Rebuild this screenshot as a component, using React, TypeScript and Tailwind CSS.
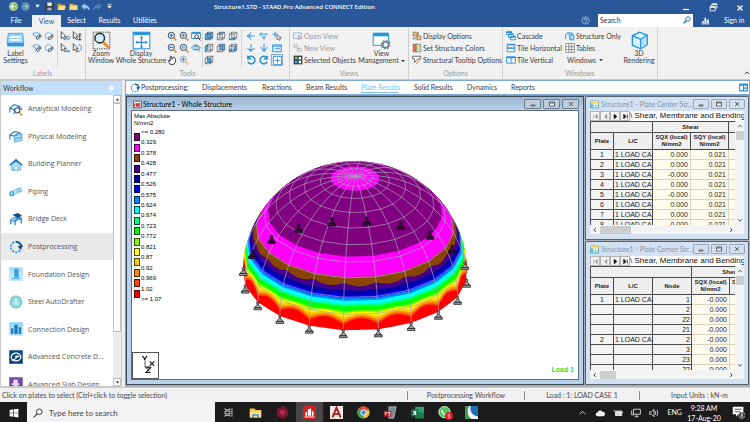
import React from "react";

/* ---------- shared icon helpers ---------- */

type P = { className?: string; children?: React.ReactNode };

const Ic = ({ className = "size-[10px]", children }: P) => (
  <svg viewBox="0 0 16 16" className={`${className} shrink-0`} fill="none" stroke="#2b8fd6" strokeWidth="1.5" aria-hidden="true">
    {children}
  </svg>
);

const Magnifier = ({ mark, muted = false }: { mark: React.ReactNode; muted?: boolean }) => (
  <Ic>
    <circle cx="7" cy="7" r="5" fill="#e4f3ff" stroke={muted ? "#9ba8b3" : "#2c3c4c"} />
    <path d="M11 11l4 4" stroke={muted ? "#eab98a" : "#e58a2b"} strokeWidth="2.5" />
    <g stroke="#1e80cf">{mark}</g>
  </Ic>
);

const Cube = ({ face }: { face: React.ReactNode }) => (
  <Ic>
    <g fill="#55b4f0" stroke="none">{face}</g>
    <path d="M2 5h8v9H2zM2 5l4-3h8v9l-4 3M10 5l4-3M6 2v9h8M6 11l-4 3" stroke="#444f5a" strokeWidth="1" />
  </Ic>
);

const Beads = ({ flip = false }: { flip?: boolean }) => (
  <Ic>
    <path d={flip ? "M2 5l5-3 6 3v6l-5 3-6-3z" : "M1 5l6-3 6 3-6 4z"} stroke="#37a0e4" strokeDasharray={flip ? "2 1" : undefined} />
    <path d="M6 11l3-2 3 2-3 3z" fill="#fff" stroke="#33475a" />
    <circle cx="13" cy="8" r="1.6" fill="#fff" stroke="#33475a" />
  </Ic>
);

const Cursor = ({ extra }: { extra: React.ReactNode }) => (
  <Ic>
    <path d="M2 1v11l3-2 2 4 2-1-2-4h3z" fill="#fff" stroke="#30363c" strokeWidth="1.3" />
    {extra}
  </Ic>
);

/* ---------- title bar ---------- */

const quick: [string, React.ReactNode][] = [
  ["Back", <><circle cx="8" cy="8" r="7" fill="#74bf43" stroke="#e5f3d9" /><path d="M12 8H5M8 4L4 8l4 4" stroke="#fff" strokeWidth="2" /></>],
  ["Forward", <><circle cx="8" cy="8" r="7" fill="#4d87a3" stroke="#6f9bbd" /><path d="M4 8h7M8 4l4 4-4 4" stroke="#a6c8d8" strokeWidth="2" /></>],
  ["History", <path d="M3 4h10l-5 7z" fill="#fff" stroke="none" />],
  ["Save", <><path d="M1 1h14v14H1z" fill="#34393f" stroke="none" /><path d="M4 1h8v6H4z" fill="#e8eef4" stroke="none" /><path d="M4 10h8v5H4z" fill="#9fb2c2" stroke="none" /></>],
  ["Open", <><path d="M1 3h5l2 2h6v9H1z" fill="#d9a632" stroke="none" /><path d="M4 7h12l-3 7H1z" fill="#ffe07a" stroke="none" /></>],
  ["Close model", <><path d="M1 3h5l2 2h7v9H1z" fill="#e8b548" stroke="none" /><path d="M1 7h14v7H1z" fill="#fbd97d" stroke="none" /></>],
  ["Undo", <path d="M1 8l6-5v3c5 0 8 3 8 8-2-3-4-4-8-4v3z" fill="#8fd0fa" stroke="#c9e9ff" strokeWidth=".8" />],
  ["Redo", <path d="M15 8L9 3v3c-5 0-8 3-8 8 2-3 4-4 8-4v3z" fill="#3f83b9" stroke="#5fa4d4" strokeWidth=".8" />],
  ["Customize", <path d="M3 3h10M4 7h8l-4 5z" fill="#fff" stroke="#fff" />],
];

const Header = () => (
  <header className="h-[27px] shrink-0 bg-[#2a579a] text-white">
    <div className="flex h-[13px] items-center pl-2">
      <div className="flex w-[206px] shrink-0 gap-[2px]">
        {quick.map(([label, art]) => (
          <button key={label} aria-label={label} className="flex w-[10px] items-center justify-center">
            <Ic className={label === "History" || label === "Customize" ? "size-[7px]" : "size-[9px]"}>{art}</Ic>
          </button>
        ))}
      </div>
      <h1 className="flex-1 font-['Open_Sans',sans-serif] text-[6px] leading-[12px] font-semibold whitespace-nowrap">Structure1.STD - STAAD.Pro Advanced CONNECT Edition</h1>
      <div className="flex w-[72px] items-center justify-between pt-[2px] pr-[6px] pl-1">
        <button aria-label="Minimize"><Ic className="size-[8px]"><path d="M2 11h12" stroke="#fff" strokeWidth="2.5" /></Ic></button>
        <button aria-label="Restore"><Ic className="size-[9px]"><path d="M5 5V2h9v7h-3M2 6h9v8H2z" stroke="#fff" /><path d="M2 7h9M5 2h9" stroke="#fff" strokeWidth="2.5" /></Ic></button>
        <button aria-label="Close"><Ic className="size-[8px]"><path d="M3 3l10 10M13 3L3 13" stroke="#fff" strokeWidth="2.6" /></Ic></button>
      </div>
    </div>
    <div className="flex h-[14px] items-center text-[7px] leading-[10px]">
      <nav className="flex h-full flex-1 items-center">
        <button className="w-[32px]">File</button>
        <button className="mt-[2px] h-[12px] w-[29px] bg-[#f1f1f1] text-[#2a579a]">View</button>
        <button className="w-[31px]">Select</button>
        <button className="w-[35px]">Results</button>
        <button className="w-[36px]">Utilities</button>
      </nav>
      <button aria-label="Help" className="mr-2">
        <Ic className="size-[9px]"><circle cx="8" cy="8" r="6.5" stroke="#8db9ee" /><path d="M5.5 6.5c0-3 5-3 5 0 0 1.500-2.500 1.500-2.500 3.500M8 11v2" stroke="#d7e7fb" /></Ic>
      </button>
      <label className="flex h-[13px] w-[95px] items-center bg-white pr-[2px] pl-[2px]">
        <input aria-label="Search" placeholder="Search" className="w-full min-w-0 flex-1 text-[7px] placeholder:text-[#333]" />
        <Ic className="size-[8px]"><circle cx="10" cy="6" r="4.500" stroke="#2a6fc0" strokeWidth="2" /><path d="M7 9l-6 6" stroke="#2a6fc0" strokeWidth="2.500" /></Ic>
      </label>
      <button aria-label="Account" className="ml-2 flex items-center">
        <Ic className="size-[9px]"><path d="M1 14h14" stroke="#fff" /><path d="M2 13V9h3v4M6 13V3h3v10M10 13V6h4v7" fill="#e5f1ff" stroke="none" /></Ic>
      </button>
      <button className="ml-[14px] w-[26px] text-left whitespace-nowrap">Sign in</button>
    </div>
  </header>
);

/* ---------- ribbon ---------- */

const Big = ({ art, lines, className, arrow }: { art: React.ReactNode; lines: string[]; className: string; arrow?: boolean }) => (
  <button className={`${className} flex h-[35px] shrink-0 flex-col items-center leading-[7px] whitespace-nowrap`}>
    <span className="flex h-[20px] items-center">{art}</span>
    <span>{lines[0]}</span>
    <span className="flex items-center">
      {lines[1]}
      {arrow && <Ic className="ml-[2px] size-[4px]"><path d="M1 4h14l-7 9z" fill="#333" stroke="none" /></Ic>}
    </span>
  </button>
);

const Grid = ({ items, cols, label }: { items: React.ReactNode[]; cols: string; label: string }) => (
  <div className={`grid ${cols} h-9 shrink-0 auto-rows-[12px] content-start`}>
    {items.map((it, i) => (
      <button key={i} aria-label={`${label} ${i + 1}`} className="flex items-center justify-center">
        {it}
      </button>
    ))}
  </div>
);

const Group = ({ title, className, children }: { title: string; className: string; children: React.ReactNode }) => (
  <section className={`${className} flex shrink-0 flex-col border-r border-[#cfcfcf] pt-[3px]`}>
    <div className="flex h-[38px]">{children}</div>
    <h2 className="text-center leading-[11px] text-[#9a9a9a]">{title}</h2>
  </section>
);

const Row = ({ art, text, muted }: { art?: React.ReactNode; text: React.ReactNode; muted?: boolean }) => (
  <button className={`flex h-3 items-center gap-px whitespace-nowrap ${muted ? "text-[#9c9c9c]" : ""}`}>
    {art}
    <span className="flex items-center">{text}</span>
  </button>
);

const Sep = () => <div className="h-[38px] w-px shrink-0 bg-[#d2d2d2]" />;

const rotations: React.ReactNode[] = [
  <Ic><path d="M2 8h12M8 2C5 5 5 11 8 14M5 5L2 8l3 3" /></Ic>,
  <Ic><path d="M2 5h12M11 8c-3 4-6 3-6 0M8 14V9M4 2L1 5l3 3" /></Ic>,
  <Ic><path d="M5 1v9M1 5h8" /><path d="M8 6v8l2-2 2 3 1-1-1-3h3z" fill="#fff" stroke="#333" strokeWidth="1" /></Ic>,
  <Ic><path d="M8 2v12M2 8c3 4 9 4 12 0M5 11l3 3" /></Ic>,
  <Ic><path d="M8 1v12M3 6c0 6 10 6 10 0M5 11l3 3 3-3" /></Ic>,
  <Ic><path d="M1 3h14v11H1z" fill="#dff1ff" /><path d="M1 5h14M4 10l2-2 2 2 3-2 2 2" /></Ic>,
  <Ic><path d="M4 4a6 6 0 1 1-1 7M3 1v5h5" strokeWidth="2.400" /></Ic>,
  <Ic><path d="M12 4a6 6 0 1 0 1 7M13 1v5H8" strokeWidth="2.400" /></Ic>,
  <span className="flex size-[12px] items-center justify-center border border-[#8da9c4] bg-[#cfe3f5]">
    <Ic className="size-[9px]"><path d="M1 1h14v14H1z" fill="#fff" /><path d="M8 3v10M3 8h10" /></Ic>
  </span>,
];

const Ribbon = () => (
  <div className="flex h-[53px] shrink-0 overflow-hidden border-b border-[#c8c8c8] bg-[#f1f1f1] text-[7px] text-[#3c3c3c]">
    <Group title="Labels" className="w-[86px]">
      <Big
        className="w-[31px]"
        lines={["Label", "Settings"]}
        art={<Ic className="size-[19px]"><path d="M2 2h12l1 8-1 2H2l-1-2z" fill="#8fd2fb" stroke="#4ba8e3" strokeWidth=".8" /><path d="M3 5h10M3 7.500h10" stroke="#fff" /><path d="M1 10h14v3H1z" fill="#2e95dc" stroke="none" /></Ic>}
      />
      <Grid label="Labels" cols="grid-cols-[12px_12px]" items={[<Beads />, <Beads flip />, <Beads />, <Beads flip />]} />
      <div className="w-[2px]" />
      <Sep />
      <Grid
        label="Pointer"
        cols="grid-cols-[13px_12px]"
        items={[
          <Cursor extra={<circle cx="13" cy="11" r="2.500" />} />,
          <Cursor extra={<path d="M10 5h5M12.500 5v9M10 14h5" stroke="#333" />} />,
          <Cursor extra={<path d="M10 14l3-3 3 3z" />} />,
          <Cursor extra={<path d="M10 3c6 0 6 4 4 8l-5 4" />} />,
        ]}
      />
    </Group>
    <Group title="Tools" className="w-[204px]">
      <Big
        className="w-[30px]"
        lines={["Zoom", "Window"]}
        art={<Ic className="size-[19px]"><path d="M1 1h14v14H1z" stroke="#222" strokeWidth=".8" strokeDasharray="1 1" /><circle cx="6.500" cy="6" r="4" fill="#d4ecff" stroke="#30353a" strokeWidth="1.300" /><path d="M9.500 9.500l4.500 4.500" stroke="#ee8a22" strokeWidth="2.200" /></Ic>}
      />
      <Big
        className="w-[50px]"
        lines={["Display", "Whole Structure"]}
        art={<Ic className="size-[19px]"><path d="M1 1h14v14H1z" fill="#fff" strokeWidth=".9" /><path d="M1 1h14v2.500H1z" fill="#2b95dc" stroke="none" /><path d="M8 5v9M3.500 9.500h9M7 6l1-1 1 1M7 13l1 1 1-1M4.500 8.500l-1 1 1 1M11.500 8.500l1 1-1 1" strokeWidth="1" /></Ic>}
      />
      <Grid
        label="Zoom"
        cols="grid-cols-[12px_12px_12px]"
        items={[
          <Magnifier mark={<path d="M4.500 7h5M7 4.500v5" strokeWidth="2" />} />,
          <Magnifier mark={<path d="M4 7h6M7 4v6" />} />,
          <Ic><path d="M1 3h14v9H1z" fill="#fff" /><path d="M1 3h14" strokeWidth="3" /><circle cx="9" cy="9" r="3" fill="#fff" stroke="#333" /><path d="M11 11l4 4" stroke="#333" /></Ic>,
          <Magnifier mark={<path d="M4 7h6" strokeWidth="2" />} />,
          <Magnifier mark={<circle cx="7" cy="7" r="1.500" />} />,
          <Ic><path d="M1 8c3-6 11-6 14 0-3 4-11 4-14 0z" /><circle cx="9" cy="8" r="3" /><path d="M11 10l3 4M3 6l5-4" stroke="#7089a0" /></Ic>,
          <Ic><path d="M5 15L2 9l2-1 1 2V3l2-1 1 5 2-4 2 1 2 4-1 4-2 3z" fill="#fff" stroke="#3c3c3c" /></Ic>,
          <Magnifier muted mark={<path d="M4 7h6M7 4v6" />} />,
        ]}
      />
      <Sep />
      <Grid
        label="View from"
        cols="grid-cols-[12px_12px_12px]"
        items={[
          <Cube face={<path d="M2 5l4-3h8v9l-4 3H2z" />} />,
          <Cube face={<path d="M2 5l4-3h8l-4 3z" />} />,
          <Cube face={<path d="M2 14l4-3h8l-4 3z" />} />,
          <Cube face={<path d="M2 5l4-3v9l-4 3z" />} />,
          <Cube face={<path d="M6 2h8v9H6z" />} />,
          <Cube face={<path d="M10 5l4-3v9l-4 3zM2 9h5v5H2z" />} />,
          <Cube face={<path d="M5 5h7v8H5z" />} />,
        ]}
      />
      <div className="w-[2px]" />
      <Sep />
      <div className="w-[2px]" />
      <Grid label="Rotate" cols="grid-cols-[13px_13px_14px]" items={rotations} />
    </Group>
    <Group title="Views" className="w-[119px]">
      <div className="w-[65px] shrink-0 pl-[3px]">
        <Row muted text="Open View" art={<Ic><path d="M1 3h12v9H1z" stroke="#8cb9d8" /><path d="M9 7l5 5h-3l-2 2z" fill="#fff" stroke="#999" /></Ic>} />
        <Row muted text="New View" art={<Ic><path d="M2 3l4-1 2 3-3 3-4-2zM8 9l4-1 2 3-3 3-4-2zM5 7l4 3" stroke="#a5a5a5" /></Ic>} />
        <Row text="Selected Objects" art={<Ic><path d="M1 1h14v14H1z" fill="#2f3b45" stroke="none" /><path d="M3 3h4v4H3z" fill="#7ccc4a" stroke="none" /><path d="M9 9h4v4H9zM9 3h4v4H9z" fill="#fff" stroke="none" /><path d="M3 9h4v4H3z" fill="#4ea7e8" stroke="none" /></Ic>} />
      </div>
      <Big
        arrow
        className="w-[53px]"
        lines={["View", "Management"]}
        art={<Ic className="size-[19px]"><path d="M1 2h13v10H1z" fill="#fff" strokeWidth=".8" /><path d="M1 1.500h13v3H1z" fill="#2b95dc" stroke="none" /><circle cx="11.500" cy="11.500" r="2.500" fill="#f1f1f1" stroke="#6b7a88" strokeWidth="1.300" /><circle cx="11.500" cy="11.500" r="3.600" stroke="#6b7a88" strokeWidth="1" strokeDasharray="1.400 1.400" /></Ic>}
      />
    </Group>
    <Group title="Options" className="w-[94px]">
      <div className="pl-[3px]">
        <Row text="Display Options" art={<Ic><path d="M2 2h6v6H2zM8 8h6v6H8z" fill="#f3c890" stroke="#9a7548" /><path d="M10 2v4M3 10v4M5 12h2" stroke="#555" /></Ic>} />
        <Row text="Set Structure Colors" art={<Ic><path d="M2 2h5v12H2z" fill="#e7664a" stroke="#777" /><path d="M7 2h7v12H7z" fill="#cdebc4" stroke="#888" /><path d="M7 6h6M7 10h6" stroke="#e4b84c" /></Ic>} />
        <Row text="Structural Tooltip Options" art={<Ic><path d="M1 2h13v4H9L4 12V6H1z" fill="#fff" stroke="#666" /><path d="M7 14l6-8" stroke="#e0a04a" strokeWidth="2" /></Ic>} />
      </div>
    </Group>
    <Group title="Windows" className="w-[155px]">
      <div className="w-[62px] pl-[3px]">
        <Row text="Cascade" art={<Ic><path d="M1 1h8v5H1zM4 5h8v5H4zM7 9h8v5H7z" fill="#fff" /><path d="M1 2h8M4 5h8M7 9h8" strokeWidth="2" /></Ic>} />
        <Row text="Tile Horizontal" art={<Ic><path d="M2 2h12v12H2zM2 8h12" fill="#fff" /><path d="M2 3h12M2 8h12" strokeWidth="2" /></Ic>} />
        <Row text="Tile Vertical" art={<Ic><path d="M1 3h14v10H1zM8 3v10" fill="#fff" /><path d="M1 4h14" strokeWidth="2.500" /></Ic>} />
      </div>
      <div className="w-[56px]">
        <Row text="Structure Only" art={<Ic><path d="M1 13V7l3-4 4 4v6M4 3h7v5" /><path d="M8 6h6v8H8z" fill="#b9e1fb" /></Ic>} />
        <Row text="Tables" art={<Ic><path d="M1 1h14v14H1zM6 1v14M10.500 1v14M1 6h14M1 10.500h14" fill="#fff" stroke="#777" strokeWidth="1.200" /></Ic>} />
        <Row text={<span className="flex items-center gap-[3px] pl-[2px]">Windows<Ic className="size-[4px]"><path d="M1 4h14l-7 9z" fill="#333" stroke="none" /></Ic></span>} />
      </div>
      <Big
        className="w-[36px]"
        lines={["3D", "Rendering"]}
        art={<Ic className="size-[19px]"><path d="M2 4l6-3 6.500 2.500v8L9 15 2 12z" fill="#d9f0ff" stroke="#2195dc" strokeWidth="1.200" /><path d="M2 4l7 3 5.500-3.500M9 7v8" stroke="#2195dc" strokeWidth="1.200" /><path d="M9 7l5.500-3.500v8L9 15z" fill="#b5e0fa" stroke="#2195dc" strokeWidth=".8" /></Ic>}
      />
    </Group>
    <div className="flex flex-1 items-end justify-end pb-[3px]">
      <button aria-label="Collapse ribbon"><Ic className="size-[6px]"><path d="M2 11l6-6 6 6" stroke="#333" strokeWidth="2.500" /></Ic></button>
    </div>
  </div>
);

/* ---------- workflow panel ---------- */

const Tile = ({ id, from, to, children }: { id: string; from: string; to: string; children: React.ReactNode }) => (
  <>
    <defs>
      <linearGradient id={id} x1="0" y1="0" x2="0" y2="1"><stop offset="0" stopColor={from} /><stop offset="1" stopColor={to} /></linearGradient>
    </defs>
    <path d="M.5.5h15v15H.5z" fill={`url(#${id})`} stroke={from} strokeWidth=".6" />
    {children}
  </>
);

const SwirlArt = (
  <>
    <circle cx="8" cy="8" r="6" stroke="#2f9ae0" strokeWidth="2" strokeDasharray="2.500 1.300" />
    <path d="M8 2a6 6 0 0 1 6 6" stroke="#1b5f9e" strokeWidth="2.400" />
    <path d="M10 7l6-1-3 5z" fill="#12497c" stroke="none" />
  </>
);

const workflows: [string, React.ReactNode][] = [
  ["Analytical Modeling", <><path d="M1 12V7l5-4 6 2 3 4M1 7l5 2 6-4M6 9v5" stroke="#2d78ad" strokeWidth="1.300" /><circle cx="9.500" cy="9.500" r="3" fill="#e6f4fd" stroke="#334d66" strokeWidth="1.200" /><path d="M12 12l3 3.500" stroke="#ee8a22" strokeWidth="1.800" /></>],
  ["Physical Modeling", <><path d="M1 12V7l5-4 6 1 3 3M1 7l5 1 6-4" stroke="#3183bb" strokeWidth="1.400" /><path d="M6 8l9-2v3l-9 2zM6 12l9-2v3l-9 2z" fill="#a9dbf7" stroke="#3e9fd9" strokeWidth=".8" /></>],
  ["Building Planner", <><path d="M3 8v7h10V8L8 4z" fill="#aadcf9" stroke="#46a3dd" strokeWidth=".8" /><path d="M6.500 15v-5h3v5z" fill="#fff" stroke="#46a3dd" strokeWidth=".6" /><path d="M0 9l8-7 8 7-1 1-7-5-7 5z" fill="#2173b3" stroke="none" /></>],
  ["Piping", <><path d="M2 9l11-5 2 4-11 5z" fill="#b5e0fa" stroke="#59afe2" strokeWidth=".8" /><ellipse cx="3" cy="11" rx="1.800" ry="2.300" fill="#e8f6ff" stroke="#3c98d4" /><path d="M9 5.500l2 4M11 5l2 4" stroke="#59afe2" strokeWidth=".8" /></>],
  ["Bridge Deck", <><path d="M1 9l10-5 4 3-9 4z" fill="#7fc5ef" stroke="#2e86c4" strokeWidth=".8" /><path d="M2 10v4M7 11v4M14 8v5M7 11c1-3 3-4 7-3" stroke="#2e86c4" strokeWidth="1.500" /><path d="M4 3l6-2 5 3-5 3z" fill="#104f86" stroke="none" /></>],
  ["Postprocessing", SwirlArt],
  ["Foundation Design", <Tile id="fd" from="#9adaf7" to="#d8f2ff"><path d="M6 2h5v10H6z" fill="#3f9fd8" stroke="none" /><path d="M3 12h10v2H3z" fill="#5ab6e8" stroke="none" /></Tile>],
  ["Steel AutoDrafter", <><circle cx="8" cy="8" r="7" fill="#5dc0cf" stroke="#9adbe4" /><circle cx="8" cy="8" r="4.500" fill="#8ed6de" stroke="#e0f7f9" strokeWidth=".8" /><path d="M6 11l2-6 2 6M7 9h2" stroke="#fff" strokeWidth="1" /></>],
  ["Connection Design", <Tile id="cd" from="#8ad4f7" to="#e6f7ff"><path d="M2 7h3v7H2zM6 3h4v11H6zM11 6h3v8h-3z" fill="#1c7ec4" stroke="none" /></Tile>],
  ["Advanced Concrete D...", <Tile id="ac" from="#0f4c8c" to="#0a3c74"><ellipse cx="8" cy="8" rx="5.500" ry="4.500" stroke="#fff" strokeWidth="1.500" /><path d="M3 12c4 0 5-5 9-5-2 0-4-1-5 1" stroke="#fff" strokeWidth="1.300" /></Tile>],
  ["Advanced Slab Design", <Tile id="as" from="#7b4fa8" to="#5e3690"><path d="M5 3h5v9H5zM3 7h9v2H3z" fill="#e6d9f5" stroke="none" /></Tile>],
];

const Workflow = () => (
  <aside className="flex w-[122px] shrink-0 flex-col border border-[#c9c9c9] bg-white">
    <div className="flex h-[14px] shrink-0 items-center justify-between bg-[#c3dffc] px-[2px] text-[7px] text-[#333]">
      <h2>Workflow</h2>
      <button aria-label="Pin panel" className="mr-1"><Ic className="size-[7px]"><path d="M5 2h6v7H5zM3 9h10M8 9v6" fill="#fff" stroke="#fff" strokeWidth="2" /></Ic></button>
    </div>
    <div className="flex h-[291px] overflow-hidden">
      <ul className="flex h-[303px] flex-1 flex-col">
        {workflows.map(([name, art]) => (
          <li key={name} className="flex min-h-0 flex-1">
            <button className={`flex flex-1 items-center gap-[5px] pl-2 font-['Open_Sans',sans-serif] text-[7px] whitespace-nowrap text-[#555] ${name === "Postprocessing" ? "bg-[#e9e9e9]" : ""}`}>
              <Ic className="size-[14px]">{art}</Ic>
              {name}
            </button>
          </li>
        ))}
      </ul>
      <div className="flex w-2 shrink-0 flex-col bg-[#ececec]">
        <button aria-label="Scroll up" className="flex h-2 items-center justify-center border border-[#c0c0c0] bg-white"><Ic className="size-[5px]"><path d="M3 11l5-6 5 6z" fill="#111" stroke="none" /></Ic></button>
        <div className="h-[229px] border border-[#c0c0c0] bg-white" />
        <div className="flex-1" />
        <button aria-label="Scroll down" className="flex h-2 items-center justify-center border border-[#c0c0c0] bg-white"><Ic className="size-[5px]"><path d="M3 5l5 6 5-6z" fill="#111" stroke="none" /></Ic></button>
      </div>
    </div>
  </aside>
);

/* ---------- dome model ---------- */

const CX = 223;
const CY = 163.5;
const R = 112.7;
const rad = (d: number) => (d * Math.PI) / 180;

const raw = (phi: number, th: number): [number, number] => [
  CX + R * Math.cos(rad(phi)) * Math.cos(rad(th)),
  CY + R * 0.505 * Math.cos(rad(phi)) * Math.sin(rad(th)) - R * 0.87 * Math.sin(rad(phi)),
];

/* Plates are flat between meridians, which stand every 18 degrees from 6. */
const at = (phi: number, th: number): [number, number] => {
  const k = Math.floor((th - 6) / 18);
  const a = 6 + k * 18;
  const t = (th - a) / 18;
  const p = raw(phi, a);
  const q = raw(phi, a + 18);
  return [p[0] + (q[0] - p[0]) * t, p[1] + (q[1] - p[1]) * t];
};

const plateT = (th: number) => (((th - 6) / 18) % 1 + 1) % 1;
const toPath = (pts: [number, number][]) => "M" + pts.map((p) => p[0].toFixed(1) + " " + p[1].toFixed(1)).join("L");
const visible = (phi: number) => {
  const s = 0.577 * Math.tan(rad(phi));
  return s >= 1 ? 90 : (Math.asin(s) * 180) / Math.PI;
};

const region = (phi: number, bump: number) => {
  const pts: [number, number][] = [];
  if (phi >= 60) {
    for (let th = 0; th <= 360; th += 3) pts.push(at(phi, th));
    return toPath(pts) + "Z";
  }
  const s = -visible(phi);
  for (let th = s; th <= 180 - s; th += 1.5) {
    pts.push(at(phi + bump * Math.sin(Math.PI * plateT(th)), th));
  }
  const last = raw(phi, 180 - s);
  const first = raw(phi, s);
  return `${toPath(pts)}L${last[0].toFixed(1)} ${last[1].toFixed(1)}A${R} ${R} 0 0 1 ${first[0].toFixed(1)} ${first[1].toFixed(1)}Z`;
};

const bands: [number, number, string][] = [
  [0, 0, "#ff0000"],
  [3.4, 3.2, "#ff4400"],
  [4.6, 2.8, "#ff8800"],
  [6, 2.4, "#ffcc00"],
  [7.6, 1.6, "#ffff00"],
  [9.4, 0.8, "#88ff00"],
  [10.6, 0.4, "#00ff00"],
  [13.2, 0, "#00ff88"],
  [14.3, 0, "#00ffff"],
  [16.2, 0, "#0088ff"],
  [17.6, 0, "#0000ff"],
  [19, 0.2, "#0000aa"],
  [22, -0.8, "#440088"],
  [25.4, -2, "#884400"],
  [28.4, 0, "#ff00ff"],
  [38.8, 0, "#800080"],
  [77.5, 0, "#ff00ff"],
];

const meridians = Array.from({ length: 20 }, (_, k) => {
  const th = 6 + 18 * k;
  const pts: [number, number][] = [];
  for (let phi = 0; phi <= 90; phi += 3) {
    if (0.866 * Math.cos(rad(phi)) * Math.sin(rad(th)) + 0.5 * Math.sin(rad(phi)) > -0.02) pts.push(raw(phi, th));
  }
  return toPath(pts);
});

const rings = [9, 18, 28, 36, 45, 54, 63, 72, 81].map((phi) => {
  const full = phi >= 60;
  const from = full ? 0 : -visible(phi);
  const to = full ? 360 : 180 - from;
  const pts: [number, number][] = [];
  for (let th = from; th <= to; th += 3) pts.push(at(phi, th));
  return toPath(pts);
});

const supports = Array.from({ length: 20 }, (_, k) => raw(0, 6 + 18 * k));

const Dome = () => (
  <svg viewBox="0 0 446 269" className="absolute inset-0 size-full" role="img" aria-label="Dome plate stress contour">
    {bands.map(([phi, bump, color], i) => (
      <path key={i} d={region(phi, bump)} fill={color} />
    ))}
    <g fill="none" stroke="#aaa2b6" strokeWidth=".8" opacity=".9">
      {[...meridians, ...rings].map((d, i) => (
        <path key={i} d={d} />
      ))}
    </g>
    {supports.map(([x, y], i) => {
      const back = Math.sin(rad(6 + 18 * i)) < -0.35;
      return (
        <g key={i} transform={`translate(${x.toFixed(1)} ${y.toFixed(1)})`} stroke={back ? "#140014" : "#222"} strokeWidth=".8" fill={back ? "#3a1a3a" : "#a5a5a5"}>
          <path d="M0 1.500L-3.200 5.500H3.200Z" />
          <path d="M-3.800 5.500h7.600v2h-7.600z" />
          <circle cx="0" cy=".6" r="1.200" />
        </g>
      );
    })}
  </svg>
);

/* ---------- MDI windows ---------- */

const swatches = [
  "bg-[#800080]", "bg-[#ff00ff]", "bg-[#884400]", "bg-[#440088]", "bg-[#0000aa]", "bg-[#0000ff]", "bg-[#0088ff]", "bg-[#00ffff]",
  "bg-[#00ff88]", "bg-[#00ff00]", "bg-[#88ff00]", "bg-[#ffff00]", "bg-[#ffcc00]", "bg-[#ff8800]", "bg-[#ff4400]", "bg-[#ff0000]",
];
const levels = ["<= 0.280", "0.329", "0.378", "0.428", "0.477", "0.526", "0.575", "0.624", "0.674", "0.723", "0.772", "0.821", "0.87", "0.92", "0.969", "1.02", ">= 1.07"];

const Buttons = ({ active }: { active?: boolean }) => (
  <div className="flex gap-[2px]">
    {["M4 10h8v2H4z", "M3 4h10v8H3zM3 6h10", "M4 4l8 8M12 4l-8 8"].map((d, i) => (
      <button
        key={d}
        aria-label={["Minimize", "Maximize", "Close"][i]}
        className={`flex items-center justify-center rounded-[1px] border ${active ? "h-[10px] w-[17px] border-[#6f7f92] bg-[#bdcbda]" : "h-[10px] w-[16px] border-[#9aa9b9] bg-[#d3dfec]"}`}
      >
        <Ic className="size-[8px]"><path d={d} stroke="#4c5560" strokeWidth="1.800" fill={i < 2 ? "#fff" : "none"} /></Ic>
      </button>
    ))}
  </div>
);

const ModelWindow = () => (
  <section className="flex min-w-0 flex-1 flex-col border border-[#3d4a57] bg-[#b9d1ea] px-1 pb-1">
    <div className="-mx-1 flex h-[13px] shrink-0 items-center bg-gradient-to-b from-[#9db7d3] to-[#b9d0e8] pt-px pr-1 pl-[6px]">
      <Ic className="size-[9px]"><path d="M1 2h14v12H1z" fill="#fff" stroke="#444" /><path d="M3 12V8l3-2v6M8 12V6h2v6M12 12V5" stroke="#b01818" strokeWidth="1.600" /></Ic>
      <h2 className="ml-px flex-1 text-[7px] text-black">Structure1 - Whole Structure</h2>
      <Buttons active />
    </div>
    <div className="relative flex min-h-0 flex-1 flex-col border border-[#5c6b7a] bg-white px-[2px] pt-[2px] font-['Liberation_Sans',Arial,sans-serif] text-[6px] leading-[7px] text-black">
      <Dome />
      <p>Max Absolute</p>
      <p>N/mm2</p>
      <div className="flex gap-px">
        <ul className="mt-[5px] flex h-[167px] w-[6px] flex-col">
          {swatches.map((c) => (
            <li key={c} className="flex min-h-0 flex-1 items-center"><span className={`h-2 w-[6px] border border-black/70 ${c}`} /></li>
          ))}
        </ul>
        <ul className="flex h-[178px] flex-col">
          {levels.map((l) => (
            <li key={l} className="flex min-h-0 flex-1 items-center">{l}</li>
          ))}
        </ul>
      </div>
      <div className="mt-auto -ml-[2px] flex items-end justify-between">
        <svg viewBox="0 0 27 27" className="size-[27px] border border-[#555] bg-white" fill="none" stroke="#111" aria-label="Axes">
          <path d="M13 9v6l5 5M13 15h6" strokeWidth=".8" />
          <path d="M10 3l2.500 3M15 3l-3 5M18 9l5 5M23 9l-5 5M14 16h5l-5 5h5" strokeWidth="1.200" />
        </svg>
        <p className="mr-[2px] mb-[6px] text-[7px] font-bold text-[#2ee52e]">Load 1</p>
      </div>
    </div>
  </section>
);

type ResultProps = { title: string; node?: boolean; rows: string[][]; thumb: string };

const th = "overflow-hidden border-r border-b border-[#4a4a4a] bg-[#efefef] p-0 text-center align-middle text-[6px] leading-[7px] font-bold";
const td = "overflow-hidden border-r border-b border-[#4a4a4a] bg-[#f3f3f3] p-0 whitespace-nowrap";
const num = "overflow-hidden border-r border-b border-[#d9d4bd] bg-[#fffcee] p-0 pr-[2px] text-right whitespace-nowrap";

const ResultWindow = ({ title, node, rows, thumb }: ResultProps) => (
  <section className="flex h-36 shrink-0 flex-col rounded-t-[2px] border border-[#56636f] bg-[#d3e2f2] px-1 pb-[5px]">
    <div className="flex h-[14px] shrink-0 items-center">
      <Ic className="size-[9px]"><path d="M1 2h14v12H1z" fill="#fff" stroke="#3d8fc0" /><path d="M1 2h14v4H1z" fill="#ffe04d" stroke="none" /><path d="M1 6h5v8H1z" fill="#62bfe8" stroke="none" /><path d="M10 6v8M6 10h9" stroke="#5b9" strokeWidth="1" /></Ic>
      <h2 className="ml-[2px] flex-1 text-[7px] whitespace-nowrap text-[#8592a0]">{title}</h2>
      <Buttons />
    </div>
    <div className="flex min-h-0 flex-1 flex-col overflow-hidden bg-[#efefef] font-['Liberation_Sans',Arial,sans-serif]">
      <div className="flex h-[10px] shrink-0 items-center bg-white">
        {["M4 3v10M12 3L7 8l5 5z", "M11 3L6 8l5 5z", "M5 3l6 5-6 5z", "M4 3l5 5-5 5zM12 3v10"].map((d, i) => (
          <button key={d} aria-label={["First", "Previous", "Next", "Last"][i]} className="flex h-[10px] w-[10px] shrink-0 items-center justify-center border border-[#b5b5b5] bg-[#f3f3f3]">
            <Ic className="size-[7px]"><path d={d} fill={i < 2 ? "#999" : "#000"} stroke={i < 2 ? "#999" : "#000"} /></Ic>
          </button>
        ))}
        <span className="text-[8px] leading-[10px] whitespace-nowrap text-[#111]">\ Shear, Membrane and Bending</span>
      </div>
      <div className="flex min-h-0 flex-1">
        <div className="min-w-0 flex-1 overflow-hidden">
          <table className={`${node ? "w-[178px]" : "w-[183px]"} table-fixed border-separate border-spacing-0 border-t border-l border-[#4a4a4a] text-[7px] leading-[9px] text-[#222]`}>
            <colgroup>
              <col className="w-[23px]" />
              <col className="w-[39px]" />
              {node && <col className="w-[39px]" />}
              <col className="w-[38px]" />
              <col className="w-[38px]" />
              {!node && <col />}
            </colgroup>
            <thead>
              <tr className="h-[11px]">
                <th className={th} colSpan={node ? 3 : 2} />
                <th className={th} colSpan={2}>{node ? "Shea" : "Shear"}</th>
                {!node && <th className={th} />}
              </tr>
              <tr className="h-[17px]">
                <th className={th}>Plate</th>
                <th className={th}>L/C</th>
                {node && <th className={th}>Node</th>}
                <th className={th}>SQX (local) N/mm2</th>
                <th className={th}>{node ? <span className="block h-[14px] pl-[2px] text-left">S</span> : "SQY (local) N/mm2"}</th>
                {!node && <th className={th} />}
              </tr>
            </thead>
            <tbody>
              {rows.map((r, i) => (
                <tr key={i} className="h-[10px]">
                  <td className={`${td} text-center`}>{r[0]}</td>
                  <td className={`${td} pl-px`}>{r[1]}</td>
                  {node && <td className={`${td} pr-[1px] text-right`}>{r[2]}</td>}
                  <td className={num}>{r[node ? 3 : 2]}</td>
                  <td className={num}>{node ? "" : r[3]}</td>
                  {!node && <td className={num} />}
                </tr>
              ))}
            </tbody>
          </table>
        </div>
        <div className="flex w-[9px] shrink-0 flex-col items-center justify-between bg-[#f3f3f3]">
          <div className="flex flex-col items-center">
            <button aria-label="Scroll up" className="flex h-[10px] items-center"><Ic className="size-[6px]"><path d="M3 11l5-5 5 5" stroke="#444" strokeWidth="2.500" /></Ic></button>
            <div className="h-[9px] w-2 bg-[#cdcdcd]" />
          </div>
          <button aria-label="Scroll down" className="flex h-[10px] items-center"><Ic className="size-[6px]"><path d="M3 6l5 5 5-5" stroke="#444" strokeWidth="2.500" /></Ic></button>
        </div>
      </div>
      <div className="flex h-[9px] shrink-0 items-center bg-[#f3f3f3] pr-[10px]">
        <button aria-label="Scroll left" className="flex w-[10px] justify-center"><Ic className="size-[6px]"><path d="M10 3L5 8l5 5" stroke="#333" strokeWidth="2.500" /></Ic></button>
        <div className={`h-2 bg-[#cdcdcd] ${thumb}`} />
        <div className="flex-1" />
        <button aria-label="Scroll right"><Ic className="size-[6px]"><path d="M6 3l5 5-5 5" stroke="#333" strokeWidth="2.500" /></Ic></button>
      </div>
    </div>
  </section>
);

const centerRows = ["0.000", "0.000", "-0.000", "0.000", "-0.000", "0.000", "0.000", "-0.000"].map((v, i) => [String(i + 1), "1 LOAD CA", v, "0.021"]);
const cornerRows = [
  ["1", "1 LOAD CA", "1", "-0.000"],
  ["", "", "2", "0.000"],
  ["", "", "22", "0.000"],
  ["", "", "21", "-0.000"],
  ["2", "1 LOAD CA", "2", "-0.000"],
  ["", "", "3", "0.000"],
  ["", "", "23", "0.000"],
  ["", "", "22", "-0.000"],
];

const tabs: [string, string][] = [
  ["Displacements", "w-[44px]"], ["Reactions", "w-[28px]"], ["Beam Results", "w-[39px]"], ["Plate Results", "w-[37px]"],
  ["Solid Results", "w-[37px]"], ["Dynamics", "w-[28px]"], ["Reports", "w-[24px]"],
];

const Main = () => (
  <main className="flex min-w-0 flex-1 flex-col">
    <div className="flex h-[15px] shrink-0 items-center border border-[#7fa8d4] bg-white pr-[1px] pl-1 text-[7px] text-[#3a3a3a]">
      <Ic>{SwirlArt}</Ic>
      <span className="ml-[1px] w-[61px]">Postprocessing:</span>
      <nav className="flex flex-1 gap-4">
        {tabs.map(([t, w]) => (
          <button key={t} className={`${w} text-left leading-[9px] whitespace-nowrap ${t === "Plate Results" ? "border-b border-[#7cc0f5] text-[#7cc0f5]" : ""}`}>{t}</button>
        ))}
      </nav>
      <Ic className="size-[9px]"><path d="M1 2h14v12H1zM1 4h14M8 4v10M8 9h7" strokeWidth="2" fill="#fff" /></Ic>
    </div>
    <div className="flex min-h-0 flex-1 gap-px border-t border-l border-[#8c959e] bg-[#a9afb5] pb-[2px]">
      <ModelWindow />
      <div className="flex w-[165px] shrink-0 flex-col gap-[1px] pr-px">
        <ResultWindow title="Structure1 - Plate Center Str..." rows={centerRows} thumb="w-[31px]" />
        <ResultWindow node title="Structure1 - Plate Corner Str..." rows={cornerRows} thumb="w-[16px]" />
      </div>
    </div>
  </main>
);

/* ---------- task bar ---------- */

const apps: [string, boolean, React.ReactNode][] = [
  ["Task view", false, <path d="M3 2v2h7V2M3 14v-2h7v2M3 6h7v4H3zM13 2v12" stroke="#ddd" strokeWidth="1.300" />],
  ["File Explorer", true, <><path d="M1 3h6l1 2h7v9H1z" fill="#f6c94f" stroke="none" /><path d="M1 7h14v7H1z" fill="#ffe08a" stroke="none" /><path d="M4 10h8v4h-2v-2H6v2H4z" fill="#3b8fd4" stroke="none" /></>],
  ["Gem", false, <><path d="M8 0l7 4v8l-7 4-7-4V4z" fill="#7d1730" stroke="none" /><path d="M8 4l4 3-4 6-4-6z" fill="#b82a4b" stroke="none" /></>],
  ["STAAD.Pro", true, <><path d="M0 0h16v16H0z" fill="#cf2222" stroke="none" /><path d="M3 12V8l2-1v5zM6 12V4l4-1v9zM11 12V6l2 1v5z" fill="#fff" stroke="none" /><path d="M2 13.500h12" stroke="#fff" strokeWidth="1.200" /></>],
  ["AutoCAD", false, <><path d="M0 0h16v16H0z" fill="#f4e9e7" stroke="none" /><path d="M3 14L8 2l5 12M5 10h6" stroke="#a81f24" strokeWidth="2.400" /></>],
  ["Chrome", true, <><circle cx="8" cy="8" r="7.500" fill="#f2c230" stroke="none" /><path d="M8 8L1.500 4.200A7.500 7.500 0 0 1 14.500 4.200z" fill="#dd4b3e" stroke="none" /><path d="M8 8L1.500 4.200A7.500 7.500 0 0 0 8 15.500z" fill="#2fa457" stroke="none" /><circle cx="8" cy="8" r="3.300" fill="#3f85ee" stroke="#fff" strokeWidth="1.200" /></>],
  ["RT", true, <><path d="M6 1h9l-3 14H6z" fill="#7c8893" stroke="#cdd6dd" strokeWidth=".8" /><path d="M0 6h9v7H0z" fill="#c32128" stroke="none" /><path d="M2 11V8h2M5 8h3M6.500 8v4" stroke="#fff" strokeWidth="1" /></>],
  ["Excel", true, <><path d="M5 1h11v14H5z" fill="#2fa36b" stroke="none" /><path d="M5 8h11v7H5z" fill="#1a7c48" stroke="none" /><path d="M0 4h9v9H0z" fill="#136b3c" stroke="none" /><path d="M3 6l3.500 5M6.500 6L3 11" stroke="#fff" /></>],
  ["WhatsApp", true, <><circle cx="8" cy="7.500" r="7" fill="#4cc85a" stroke="#fff" strokeWidth="1" /><path d="M5 5c0 4 3 6 6 6" stroke="#fff" strokeWidth="1.800" /></>],
  ["CONNECTION Client", true, <><path d="M0 0h16v16H0z" fill="#1f6fb4" stroke="none" /><path d="M7 0c-2 6 2 12 9 13v3H8C2 12 1 5 5 0z" fill="#fff" stroke="none" /><path d="M0 0h5C2 6 3 12 8 16H0z" fill="#3ba04a" stroke="none" /></>],
];

const Taskbar = () => (
  <footer className="flex h-[21px] shrink-0 items-center bg-[#1b1b1d] text-white">
    <button aria-label="Start" className="flex w-[27px] justify-center">
      <Ic><path d="M1 3l6-1v5.500H1zM8 2l7-1v6.500H8zM1 8.500h6V14l-6-1zM8 8.500h7V15l-7-1z" fill="#fff" stroke="none" /></Ic>
    </button>
    <label className="flex h-full w-[188px] items-center gap-[6px] bg-[#f3f3f3] pl-[6px]">
      <Ic><circle cx="10" cy="6" r="4.500" stroke="#333" /><path d="M7 9l-6 6" stroke="#333" strokeWidth="1.800" /></Ic>
      <input aria-label="Search Windows" placeholder="Type here to search" className="min-w-0 flex-1 text-[8px] placeholder:text-[#444]" />
    </label>
    <nav className="flex h-full flex-1">
      {apps.map(([name, open, art]) => (
        <button key={name} aria-label={name} className={`relative flex w-[27px] items-center justify-center ${name === "STAAD.Pro" ? "bg-[#4a4546]" : ""}`}>
          <Ic className={name === "Task view" ? "size-[11px]" : "size-[13px]"}>{art}</Ic>
          {open && <span className="absolute bottom-0 h-px w-[22px] bg-[#76a9dc]" />}
          {name === "WhatsApp" && <span className="absolute right-[5px] bottom-[3px] flex size-[8px] items-center justify-center rounded-full bg-[#e02020] text-[6px] leading-[8px]">1</span>}
        </button>
      ))}
    </nav>
    <div className="flex shrink-0 items-center gap-2 text-[7px]">
      <Ic className="size-[9px]"><path d="M3 11l5-5 5 5" stroke="#eee" /></Ic>
      <Ic><path d="M4 13a3 3 0 0 1 0-6 4.500 4.500 0 0 1 8-1 3.500 3.500 0 0 1 1 7z" fill="#eee" stroke="none" /></Ic>
      <Ic><path d="M4 5h10v7H4z" fill="#ddd" stroke="#eee" /><path d="M1 3l3 3M14 7h2" stroke="#eee" /></Ic>
      <Ic><path d="M4 2h11v8H4zM9 10v4M6 14h6M1 4v7h4" stroke="#eee" strokeWidth="1.300" /></Ic>
      <Ic><path d="M1 6h3l4-4v12l-4-4H1zM10 5c1 2 1 4 0 6M12.500 3c2 3 2 7 0 10" stroke="#eee" strokeWidth="1.300" /></Ic>
      <span>ENG</span>
    </div>
    <div className="w-[44px] shrink-0 text-center text-[7px] leading-[10px]">
      <p>9:28 AM</p>
      <p>17-Aug-20</p>
    </div>
    <button aria-label="Notifications" className="flex w-[24px] justify-center">
      <Ic className="size-[13px]"><path d="M1 1h13v9H8l-3 3v-3H1z" fill="#fff" stroke="none" /><path d="M3 4h9M3 7h7" stroke="#333" strokeWidth="1" /><circle cx="12" cy="11.500" r="4" fill="#333" stroke="#bbb" strokeWidth=".8" /><circle cx="12" cy="10.300" r="1" stroke="#fff" strokeWidth=".8" /><circle cx="12" cy="12.700" r="1.200" stroke="#fff" strokeWidth=".8" /></Ic>
    </button>
  </footer>
);

const StatusBar = () => (
  <div className="flex h-[15px] shrink-0 items-center border-t border-[#c9cdd1] bg-[#f1f1f1] text-[7px] leading-[9px] text-[#4a4a4a]">
    <p className="flex-1 pl-[2px]">Click on plates to select (Ctrl+click to toggle selection)</p>
    <p className="w-[117px] border-l border-[#8a8a8a] text-center">Postprocessing Workflow</p>
    <p className="w-[115px] border-l border-[#8a8a8a] text-center">Load : 1: LOAD CASE 1</p>
    <p className="w-[111px] border-l border-[#8a8a8a] pl-[31px]">Input Units : kN-m</p>
  </div>
);

export default function App() {
  return (
    <div className="flex min-h-screen flex-col overflow-hidden bg-[#eeeeee] font-['Lato','Open_Sans',sans-serif] leading-none">
      <Header />
      <Ribbon />
      <div className="flex min-h-0 flex-1 gap-[3px]">
        <Workflow />
        <Main />
      </div>
      <StatusBar />
      <Taskbar />
    </div>
  );
}
